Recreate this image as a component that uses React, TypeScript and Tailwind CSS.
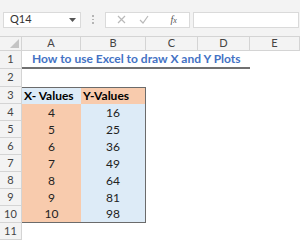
import { FC } from 'react';

const font = { fontFamily: 'Lato, "Open Sans", sans-serif' };

const cols = ['A', 'B', 'C', 'D', 'E'];
const rows = [
  { x: '4', y: '16' },
  { x: '5', y: '25' },
  { x: '6', y: '36' },
  { x: '7', y: '49' },
  { x: '8', y: '64' },
  { x: '9', y: '81' },
  { x: '10', y: '98' },
];

const RowNum: FC<{ n: number; h: string }> = ({ n, h }) => (
  <div
    className={`flex items-center justify-center border-b border-r border-[#d4d4d4] bg-[#f3f3f3] text-[11px] text-[#444] ${h}`}
  >
    {n}
  </div>
);

export default function App() {
  return (
    <div className="h-[240px] w-[300px] overflow-hidden bg-white" style={font}>
      {/* toolbar */}
      <div className="flex h-[36px] items-center bg-[#f3f3f3] pl-[3px] pt-[3px]">
        <div className="flex h-[16px] w-[78px] items-center justify-between border border-[#dadada] bg-white pl-[6px] pr-[4px] text-[11px] text-[#333]">
          <span>Q14</span>
          <svg width="7" height="4" viewBox="0 0 7 4">
            <path d="M0 0h7L3.5 4z" fill="#555" />
          </svg>
        </div>
        <div className="ml-[11px] flex flex-col gap-[2px]">
          <span className="h-[1.5px] w-[1.5px] bg-[#b5b5b5]" />
          <span className="h-[1.5px] w-[1.5px] bg-[#b5b5b5]" />
          <span className="h-[1.5px] w-[1.5px] bg-[#b5b5b5]" />
        </div>
        <div className="ml-[11px] flex h-[16px] w-[85px] items-center border border-[#dadada] bg-white">
          <svg className="ml-[11px]" width="9" height="9" viewBox="0 0 9 9">
            <path d="M1 1l7 7M8 1L1 8" stroke="#b9b9b9" strokeWidth="1.2" />
          </svg>
          <svg className="ml-[13px]" width="10" height="9" viewBox="0 0 10 9">
            <path d="M1 5l3 3 5-7" stroke="#b9b9b9" strokeWidth="1.2" fill="none" />
          </svg>
          <span
            className="ml-[22px] text-[10px] italic text-[#555]"
            style={{ fontFamily: '"Liberation Serif", serif' }}
          >
            f<span className="text-[8px]">x</span>
          </span>
        </div>
        <div className="ml-[3px] h-[16px] w-[106px] border border-[#dadada] bg-white" />
      </div>

      {/* sheet */}
      <div className="grid grid-cols-[22px_59px_65px_52px_52px_50px] text-[12px] text-[#222]">
        {/* column header */}
        <div className="relative h-[15px] border-b border-r border-t border-[#d4d4d4] bg-[#f3f3f3]">
          <svg className="absolute bottom-[2px] right-[2px]" width="9" height="9" viewBox="0 0 9 9">
            <path d="M9 0v9H0z" fill="#c4c4c4" />
          </svg>
        </div>
        {cols.map((c) => (
          <div
            key={c}
            className="flex h-[15px] items-center justify-center border-b border-r border-t border-[#d4d4d4] bg-[#f3f3f3] text-[11px] text-[#444]"
          >
            {c}
          </div>
        ))}

        {/* row 1 */}
        <RowNum n={1} h="h-[18px]" />
        <div className="col-span-4 flex h-[18px] items-center border-b-2 border-[#707070] pl-[10px] text-[12px] font-bold text-[#4472c4]">
          How to use Excel to draw X and Y Plots
        </div>
        <div className="h-[18px]" />

        {/* row 2 */}
        <RowNum n={2} h="h-[18px]" />
        <div className="col-span-5 h-[18px]" />

        {/* row 3 */}
        <RowNum n={3} h="h-[17px]" />
        <div className="flex h-[17px] items-center border-t border-[#6b6b6b] bg-[#ddebf7] pl-[2px] font-bold text-black">
          X- Values
        </div>
        <div className="flex h-[17px] items-center border-r border-t border-[#6b6b6b] bg-[#f8cbad] pl-[2px] font-bold text-black">
          Y-Values
        </div>
        <div className="col-span-3 h-[17px]" />

        {rows.map((r, i) => (
          <div key={r.x} className="contents">
            <RowNum n={i + 4} h="h-[17px]" />
            <div
              className={`flex h-[17px] items-center justify-center bg-[#f8cbad] ${
                i === rows.length - 1 ? 'border-b border-[#6b6b6b]' : ''
              }`}
            >
              {r.x}
            </div>
            <div
              className={`flex h-[17px] items-center justify-center border-r border-[#6b6b6b] bg-[#ddebf7] ${
                i === rows.length - 1 ? 'border-b' : ''
              }`}
            >
              {r.y}
            </div>
            <div className="col-span-3 h-[17px]" />
          </div>
        ))}

        {/* row 11 */}
        <RowNum n={11} h="h-[17px]" />
        <div className="col-span-5 h-[17px]" />
      </div>
    </div>
  );
}
